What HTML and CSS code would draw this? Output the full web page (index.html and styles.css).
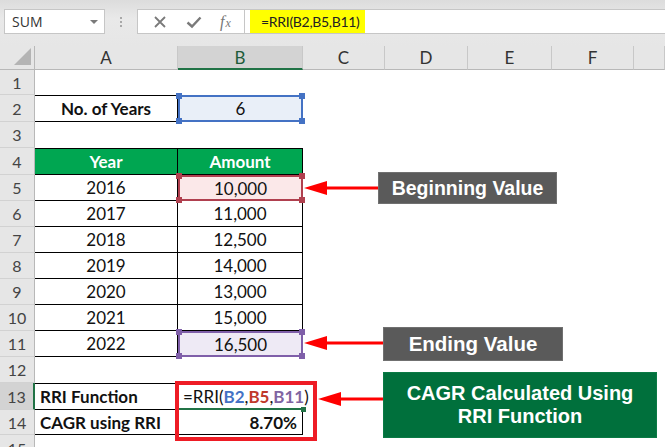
FILE: index.html
```html
<!DOCTYPE html>
<html>
<head>
<meta charset="utf-8">
<link rel="stylesheet" href="styles.css">
</head>
<body>
<div class="app">
  <div class="toolbar">
    <div class="namebox"><span>SUM</span><span class="caret"></span></div>
    <div class="grip"><i></i><i></i><i></i></div>
    <div class="fxbox">
      <svg class="ico" width="14" height="14" viewBox="0 0 14 14"><path d="M2 2 L12 12 M12 2 L2 12" stroke="#7a7a7a" stroke-width="1.8" fill="none"/></svg>
      <svg class="ico" width="16" height="14" viewBox="0 0 16 14"><path d="M1.5 7.5 L6 11.5 L14.5 2.5" stroke="#7a7a7a" stroke-width="2.4" fill="none"/></svg>
      <span class="fx">f<span class="fx-x">x</span></span>
    </div>
    <div class="formula"><div class="hl">=RRI(B2,B5,B11)</div></div>
  </div>

  <div class="sheet">
    <div class="ch corner"><svg width="17" height="17" viewBox="0 0 17 17"><path d="M17 0 L17 17 L0 17 Z" fill="#b4b4b4"/></svg></div>
    <div class="ch">A</div>
    <div class="ch ch-sel">B</div>
    <div class="ch">C</div>
    <div class="ch">D</div>
    <div class="ch">E</div>
    <div class="ch">F</div>
    <div class="ch"></div>

    <div class="rh">1</div>

    <div class="rh">2</div>
    <div class="c ctr bold bt bb br">No. of Years</div>
    <div class="c ctr sel sel-blue">6<span class="h tl"></span><span class="h tr"></span><span class="h bl"></span><span class="h brh"></span></div>

    <div class="rh">3</div>

    <div class="rh">4</div>
    <div class="c ctr head bt bb br">Year</div>
    <div class="c ctr head bt bb br">Amount</div>

    <div class="rh">5</div>
    <div class="c ctr bb br">2016</div>
    <div class="c ctr sel sel-red">10,000<span class="h tl"></span><span class="h tr"></span><span class="h bl"></span><span class="h brh"></span></div>

    <div class="rh">6</div>
    <div class="c ctr bb br">2017</div>
    <div class="c ctr bb br">11,000</div>

    <div class="rh">7</div>
    <div class="c ctr bb br">2018</div>
    <div class="c ctr bb br">12,500</div>

    <div class="rh">8</div>
    <div class="c ctr bb br">2019</div>
    <div class="c ctr bb br">14,000</div>

    <div class="rh">9</div>
    <div class="c ctr bb br">2020</div>
    <div class="c ctr bb br">13,000</div>

    <div class="rh">10</div>
    <div class="c ctr bb br">2021</div>
    <div class="c ctr bb br">15,000</div>

    <div class="rh">11</div>
    <div class="c ctr bb br">2022</div>
    <div class="c ctr sel sel-purple">16,500<span class="h tl"></span><span class="h tr"></span><span class="h bl"></span><span class="h brh"></span></div>

    <div class="rh">12</div>

    <div class="rh rh-act">13</div>
    <div class="c bold bt bb br">RRI Function</div>
    <div class="c act bt">=RRI(<b class="r-blue">B2</b>,<b class="r-red">B5</b>,<b class="r-purple">B11</b>)<span class="h-act"></span></div>

    <div class="rh">14</div>
    <div class="c bold bb br">CAGR using RRI</div>
    <div class="c right bold bb br">8.70%</div>

    <div class="rh rh-cut"><span>15</span></div>
  </div>

  <svg class="marks" width="665" height="447" viewBox="0 0 665 447">
    <rect x="177" y="383" width="138" height="56" fill="none" stroke="#ee1c25" stroke-width="4"/>
    <line x1="378" y1="188" x2="322" y2="188" stroke="#f00" stroke-width="3"/>
    <polygon points="304,188 327,181 327,195" fill="#f00"/>
    <line x1="383" y1="343" x2="322" y2="343" stroke="#f00" stroke-width="3"/>
    <polygon points="304,343 327,336 327,350" fill="#f00"/>
    <line x1="383" y1="399" x2="336" y2="399" stroke="#f00" stroke-width="3"/>
    <polygon points="318,399 341,392 341,406" fill="#f00"/>
  </svg>

  <div class="callout beg">Beginning Value</div>
  <div class="callout endv">Ending Value</div>
  <div class="callout cagr">CAGR Calculated Using<br>RRI Function</div>
</div>
</body>
</html>
```

FILE: styles.css
```css
* { box-sizing: border-box; }
body {
  margin: 0;
  background: #fff;
  font-family: Lato, "Open Sans", sans-serif;
}
.app {
  position: relative;
  width: 665px;
  height: 447px;
  overflow: hidden;
}

/* toolbar */
.toolbar {
  height: 46px;
  background: linear-gradient(#dcdcdc, #e9e9e9 40%, #e6e6e6);
  display: flex;
  align-items: flex-start;
  padding: 9px 0 0 4px;
}
.namebox {
  width: 101px;
  height: 25px;
  background: #fff;
  border: 1px solid #c6c6c6;
  display: flex;
  align-items: center;
  justify-content: space-between;
  padding: 0 6px 0 7px;
  font: 14px "Open Sans", sans-serif;
  color: #333;
}
.caret {
  width: 0;
  height: 0;
  border-left: 4px solid transparent;
  border-right: 4px solid transparent;
  border-top: 4px solid #7a7a7a;
}
.grip {
  width: 32px;
  height: 25px;
  display: flex;
  flex-direction: column;
  align-items: center;
  justify-content: center;
  gap: 2px;
}
.grip i {
  display: block;
  width: 2px;
  height: 2px;
  background: #a8a8a8;
}
.fxbox {
  width: 108px;
  height: 25px;
  background: #fff;
  border: 1px solid #c6c6c6;
  display: flex;
  align-items: center;
  justify-content: space-around;
  padding: 0 4px 0 6px;
}
.fx {
  font: italic 16px "Liberation Serif", serif;
  color: #777;
  line-height: 1;
}
.fx-x { font-size: 12px; margin-left: 1px; }
.formula {
  flex: 1;
  height: 25px;
  background: #fff;
  border-top: 1px solid #c6c6c6;
  border-bottom: 1px solid #c6c6c6;
  padding: 0 0 0 5px;
  display: flex;
}
.hl {
  width: 115px;
  background: #ffff00;
  display: flex;
  align-items: center;
  padding-left: 11px;
  font: 14px Lato, sans-serif;
  letter-spacing: -0.3px;
  color: #222;
  white-space: nowrap;
}

/* sheet grid */
.sheet {
  display: grid;
  grid-template-columns: 35px 143px 125px 82px 83px 84px 82px 31px;
  grid-template-rows: 24px 25px 27px 26px 27px repeat(8, 26px) 27px 25px 12px;
}
.ch {
  background: #e6e6e6;
  border-right: 1px solid #c8c8c8;
  border-bottom: 1px solid #b8b8b8;
  display: flex;
  align-items: center;
  justify-content: center;
  font-size: 17px;
  color: #333;
}
.corner {
  justify-content: flex-end;
  align-items: flex-end;
  padding: 0 3px 4px 0;
  border-right: 1px solid #b8b8b8;
}
.ch-sel {
  background: #d3d3d3;
  border-bottom: 2px solid #217346;
  color: #1e5c3a;
}
.rh {
  grid-column: 1;
  background: #e6e6e6;
  border-right: 1px solid #b8b8b8;
  border-bottom: 1px solid #d2d2d2;
  display: flex;
  align-items: center;
  justify-content: center;
  font-size: 16px;
  color: #444;
}
.rh-act {
  background: #d3d3d3;
  border-right: 2px solid #217346;
}
.rh-cut {
  align-items: flex-start;
  overflow: hidden;
  border-bottom: none;
}
.rh-cut span { line-height: 1; padding-top: 6px; }

.c {
  display: flex;
  align-items: center;
  padding: 0 5px;
  font-size: 17px;
  color: #111;
  white-space: nowrap;
}
.ctr { justify-content: center; }
.right { justify-content: flex-end; }
.bold { font-weight: 700; }
.bt { border-top: 1px solid #000; }
.bb { border-bottom: 1px solid #000; }
.br { border-right: 1px solid #000; }
.head {
  background: #00a651;
  color: #fff;
  font-weight: 700;
}

.sel { position: relative; border: 2px solid; }
.sel-blue { border-color: #4472c4; background: #e9eff8; }
.sel-red { border-color: #b0404f; background: #fbe8e9; }
.sel-purple { border-color: #7f5fa9; background: #eeeaf5; }
.h {
  position: absolute;
  width: 6px;
  height: 6px;
  z-index: 1;
}
.sel-blue .h { background: #4472c4; }
.sel-red .h { background: #b0404f; }
.sel-purple .h { background: #7f5fa9; }
.tl { left: -4px; top: -4px; }
.tr { right: -4px; top: -4px; }
.bl { left: -4px; bottom: -4px; }
.brh { right: -4px; bottom: -4px; }

.act {
  position: relative;
  border-bottom: 2px solid #217346;
  font-weight: 400;
  padding-left: 5px;
}
.h-act {
  position: absolute;
  right: -3px;
  bottom: -4px;
  width: 5px;
  height: 5px;
  background: #217346;
}
.r-blue { color: #4472c4; }
.r-red { color: #c0392b; }
.r-purple { color: #8064a2; }

/* overlays */
.marks {
  position: absolute;
  left: 0;
  top: 0;
  pointer-events: none;
}
.callout {
  position: absolute;
  display: flex;
  align-items: center;
  justify-content: center;
  text-align: center;
  color: #fff;
  font: 700 20px "Liberation Sans", Arial, sans-serif;
  background: #5a5a5a;
  border: 1px solid #707070;
}
.beg { left: 378px; top: 172px; width: 179px; height: 32px; font-size: 19.5px; }
.endv { left: 383px; top: 327px; width: 180px; height: 34px; font-size: 20.5px; }
.cagr {
  left: 383px;
  top: 372px;
  width: 274px;
  height: 66px;
  background: #00703c;
  border-color: #0a7a45;
  line-height: 23px;
}
```
